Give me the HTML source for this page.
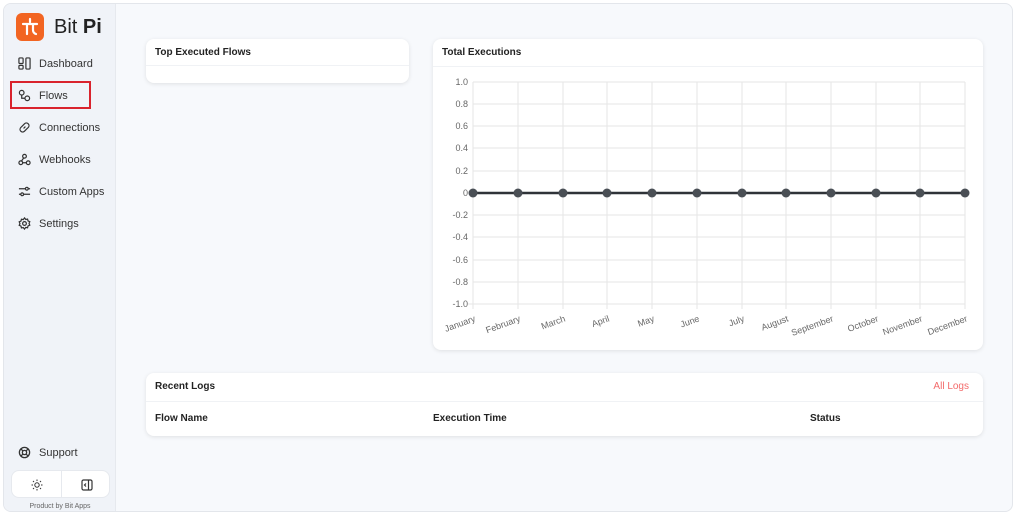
<!DOCTYPE html>
<html><head><style>
*{margin:0;padding:0;box-sizing:border-box}
body{width:1024px;height:515px;background:#fff;font-family:"Liberation Sans",sans-serif;position:relative;overflow:hidden}
.frame{position:absolute;left:3px;top:3px;width:1010px;height:509px;border:1px solid #e3e6eb;border-radius:8px;background:#f7f9fc;overflow:hidden}
.side{position:absolute;left:0;top:0;width:112px;height:100%;background:#f0f3f8;border-right:1px solid #e6e9ee}
.logo{position:absolute;left:12px;top:9px;width:28px;height:28px;background:#f26522;border-radius:6px}
.brand{position:absolute;left:50px;top:12px;font-size:20px;color:#222}
.nav{position:absolute;left:14px;font-size:11px;color:#333;display:flex;align-items:center;gap:8px}
.nav svg{width:13px;height:13px}
.card{position:absolute;background:#fff;border-radius:8px;box-shadow:0 1px 4px rgba(0,0,0,.1)}
.ct{font-size:10px;font-weight:bold;color:#222;position:absolute;left:9px;top:8px}
.hl{position:absolute;left:0;right:0;height:1px;background:#f0f2f5}
</style></head><body>
<div class="frame">
<div class="side">
<div class="logo"><svg viewBox="0 0 28 28" width="28" height="28" fill="none" stroke="#fff" stroke-width="2.2" stroke-linecap="round"><path d="M7 11h14M11 11v10M17 11v6q0 3 3 4M14 6v3"/></svg></div>
<div class="brand">Bit <b>Pi</b></div>
<div class="nav" style="top:53px"><svg viewBox="0 0 14 14" fill="none" stroke="#333" stroke-width="1.3"><rect x="1" y="1" width="4.5" height="6" rx="1"/><rect x="1" y="9" width="4.5" height="4" rx="1"/><rect x="8.5" y="1" width="4.5" height="12" rx="1"/></svg>Dashboard</div>
<div style="position:absolute;left:6px;top:77px;width:81px;height:28px;border:2px solid #d9232d"></div>
<div class="nav" style="top:85px"><svg viewBox="0 0 14 14" fill="none" stroke="#333" stroke-width="1.3"><circle cx="4" cy="4" r="2.5"/><circle cx="10" cy="10" r="2.5"/><path d="M4 6.5v3.5h3.5"/></svg>Flows</div>
<div class="nav" style="top:117px"><svg viewBox="0 0 14 14" fill="none" stroke="#333" stroke-width="1.3"><path d="M6 8l2-2M5 5l2-2a2.5 2.5 0 0 1 4 4l-2 2M9 9l-2 2a2.5 2.5 0 0 1-4-4l2-2"/></svg>Connections</div>
<div class="nav" style="top:149px"><svg viewBox="0 0 14 14" fill="none" stroke="#333" stroke-width="1.3"><circle cx="7" cy="3.5" r="2"/><circle cx="3" cy="10.5" r="2"/><circle cx="11" cy="10.5" r="2"/><path d="M6 5.5l-2.5 3.5M5 10.5h4"/></svg>Webhooks</div>
<div class="nav" style="top:181px"><svg viewBox="0 0 14 14" fill="none" stroke="#333" stroke-width="1.3"><path d="M1 4h7M11 4h2M1 10h2M6 10h7"/><circle cx="9.5" cy="4" r="1.5"/><circle cx="4.5" cy="10" r="1.5"/></svg>Custom Apps</div>
<div class="nav" style="top:213px"><svg viewBox="0 0 14 14" fill="none" stroke="#333" stroke-width="1.3"><circle cx="7" cy="7" r="2"/><path d="M7 1l1.3 1.6 2-.4.5 2 1.9.8-.8 1.9.8 1.9-1.9.8-.5 2-2-.4L7 13l-1.3-1.6-2 .4-.5-2-1.9-.8.8-1.9-.8-1.9 1.9-.8.5-2 2 .4z"/></svg>Settings</div>
<div class="nav" style="top:442px"><svg viewBox="0 0 14 14" fill="none" stroke="#333" stroke-width="1.4"><circle cx="7" cy="7" r="5.5"/><circle cx="7" cy="7" r="2.3"/><path d="M3 3l2.3 2.3M11 3L8.7 5.3M3 11l2.3-2.3M11 11L8.7 8.7"/></svg>Support</div>
<div style="position:absolute;left:7px;top:466px;width:99px;height:28px;background:#fff;border-radius:8px;border:1px solid #e6e9ee">
<div style="position:absolute;left:49px;top:0;width:1px;height:100%;background:#e6e9ee"></div>
<svg style="position:absolute;left:19px;top:8px" width="12" height="12" viewBox="0 0 12 12" fill="none" stroke="#333" stroke-width="1"><circle cx="6" cy="6" r="2.2"/><path d="M6 .5v1.5M6 10v1.5M.5 6h1.5M10 6h1.5M2 2l1 1M9 9l1 1M2 10l1-1M9 3l1-1"/></svg>
<svg style="position:absolute;left:69px;top:8px" width="12" height="12" viewBox="0 0 12 12" fill="none" stroke="#333" stroke-width="1.2"><rect x="1" y="1" width="10" height="10" rx="1.5"/><path d="M7.5 1v10M5 4.5L3.5 6 5 7.5"/></svg>
</div>
<div style="position:absolute;left:0;width:112px;top:499px;text-align:center;font-size:7px;color:#666">Product by Bit Apps</div>
</div>

<div class="card" style="left:142px;top:35px;width:263px;height:44px"><div class="ct">Top Executed Flows</div><div class="hl" style="top:26px"></div></div>

<div class="card" style="left:429px;top:35px;width:550px;height:311px"><div class="ct">Total Executions</div><div class="hl" style="top:27px"></div>
<svg style="position:absolute;left:0;top:0" width="550" height="311" font-family="Liberation Sans" font-size="9" fill="#666">
<g stroke="#e6e6e6" stroke-width="1">
<line x1="40" y1="43" x2="532" y2="43"/><line x1="40" y1="65" x2="532" y2="65"/><line x1="40" y1="87" x2="532" y2="87"/><line x1="40" y1="109" x2="532" y2="109"/><line x1="40" y1="132" x2="532" y2="132"/><line x1="40" y1="154" x2="532" y2="154"/><line x1="40" y1="176" x2="532" y2="176"/><line x1="40" y1="198" x2="532" y2="198"/><line x1="40" y1="221" x2="532" y2="221"/><line x1="40" y1="243" x2="532" y2="243"/><line x1="35" y1="265" x2="532" y2="265"/>
<line x1="40" y1="43" x2="40" y2="270"/><line x1="85" y1="43" x2="85" y2="270"/><line x1="130" y1="43" x2="130" y2="270"/><line x1="174" y1="43" x2="174" y2="270"/><line x1="219" y1="43" x2="219" y2="270"/><line x1="264" y1="43" x2="264" y2="270"/><line x1="309" y1="43" x2="309" y2="270"/><line x1="353" y1="43" x2="353" y2="270"/><line x1="398" y1="43" x2="398" y2="270"/><line x1="443" y1="43" x2="443" y2="270"/><line x1="487" y1="43" x2="487" y2="270"/><line x1="532" y1="43" x2="532" y2="270"/>
</g>
<g text-anchor="end"><text x="35" y="46">1.0</text><text x="35" y="68">0.8</text><text x="35" y="90">0.6</text><text x="35" y="112">0.4</text><text x="35" y="135">0.2</text><text x="35" y="157">0</text><text x="35" y="179">-0.2</text><text x="35" y="201">-0.4</text><text x="35" y="224">-0.6</text><text x="35" y="246">-0.8</text><text x="35" y="268">-1.0</text></g>
<line x1="40" y1="154" x2="532" y2="154" stroke="#2f3338" stroke-width="2.5"/>
<g fill="#4a4f55"><circle cx="40" cy="154" r="4.5"/><circle cx="85" cy="154" r="4.5"/><circle cx="130" cy="154" r="4.5"/><circle cx="174" cy="154" r="4.5"/><circle cx="219" cy="154" r="4.5"/><circle cx="264" cy="154" r="4.5"/><circle cx="309" cy="154" r="4.5"/><circle cx="353" cy="154" r="4.5"/><circle cx="398" cy="154" r="4.5"/><circle cx="443" cy="154" r="4.5"/><circle cx="487" cy="154" r="4.5"/><circle cx="532" cy="154" r="4.5"/></g>
<g text-anchor="end">
<text transform="translate(43,282) rotate(-20)">January</text><text transform="translate(88,282) rotate(-20)">February</text><text transform="translate(133,282) rotate(-20)">March</text><text transform="translate(177,282) rotate(-20)">April</text><text transform="translate(222,282) rotate(-20)">May</text><text transform="translate(267,282) rotate(-20)">June</text><text transform="translate(312,282) rotate(-20)">July</text><text transform="translate(356,282) rotate(-20)">August</text><text transform="translate(401,282) rotate(-20)">September</text><text transform="translate(446,282) rotate(-20)">October</text><text transform="translate(490,282) rotate(-20)">November</text><text transform="translate(535,282) rotate(-20)">December</text>
</g></svg></div>

<div class="card" style="left:142px;top:369px;width:837px;height:63px">
<div class="ct">Recent Logs</div>
<div style="position:absolute;right:14px;top:8px;font-size:10px;color:#f36b6b">All Logs</div>
<div class="hl" style="top:28px"></div>
<div style="position:absolute;left:9px;top:40px;font-size:10px;font-weight:bold;color:#222">Flow Name</div>
<div style="position:absolute;left:287px;top:40px;font-size:10px;font-weight:bold;color:#222">Execution Time</div>
<div style="position:absolute;left:664px;top:40px;font-size:10px;font-weight:bold;color:#222">Status</div>
</div>
</div>
</body></html>
